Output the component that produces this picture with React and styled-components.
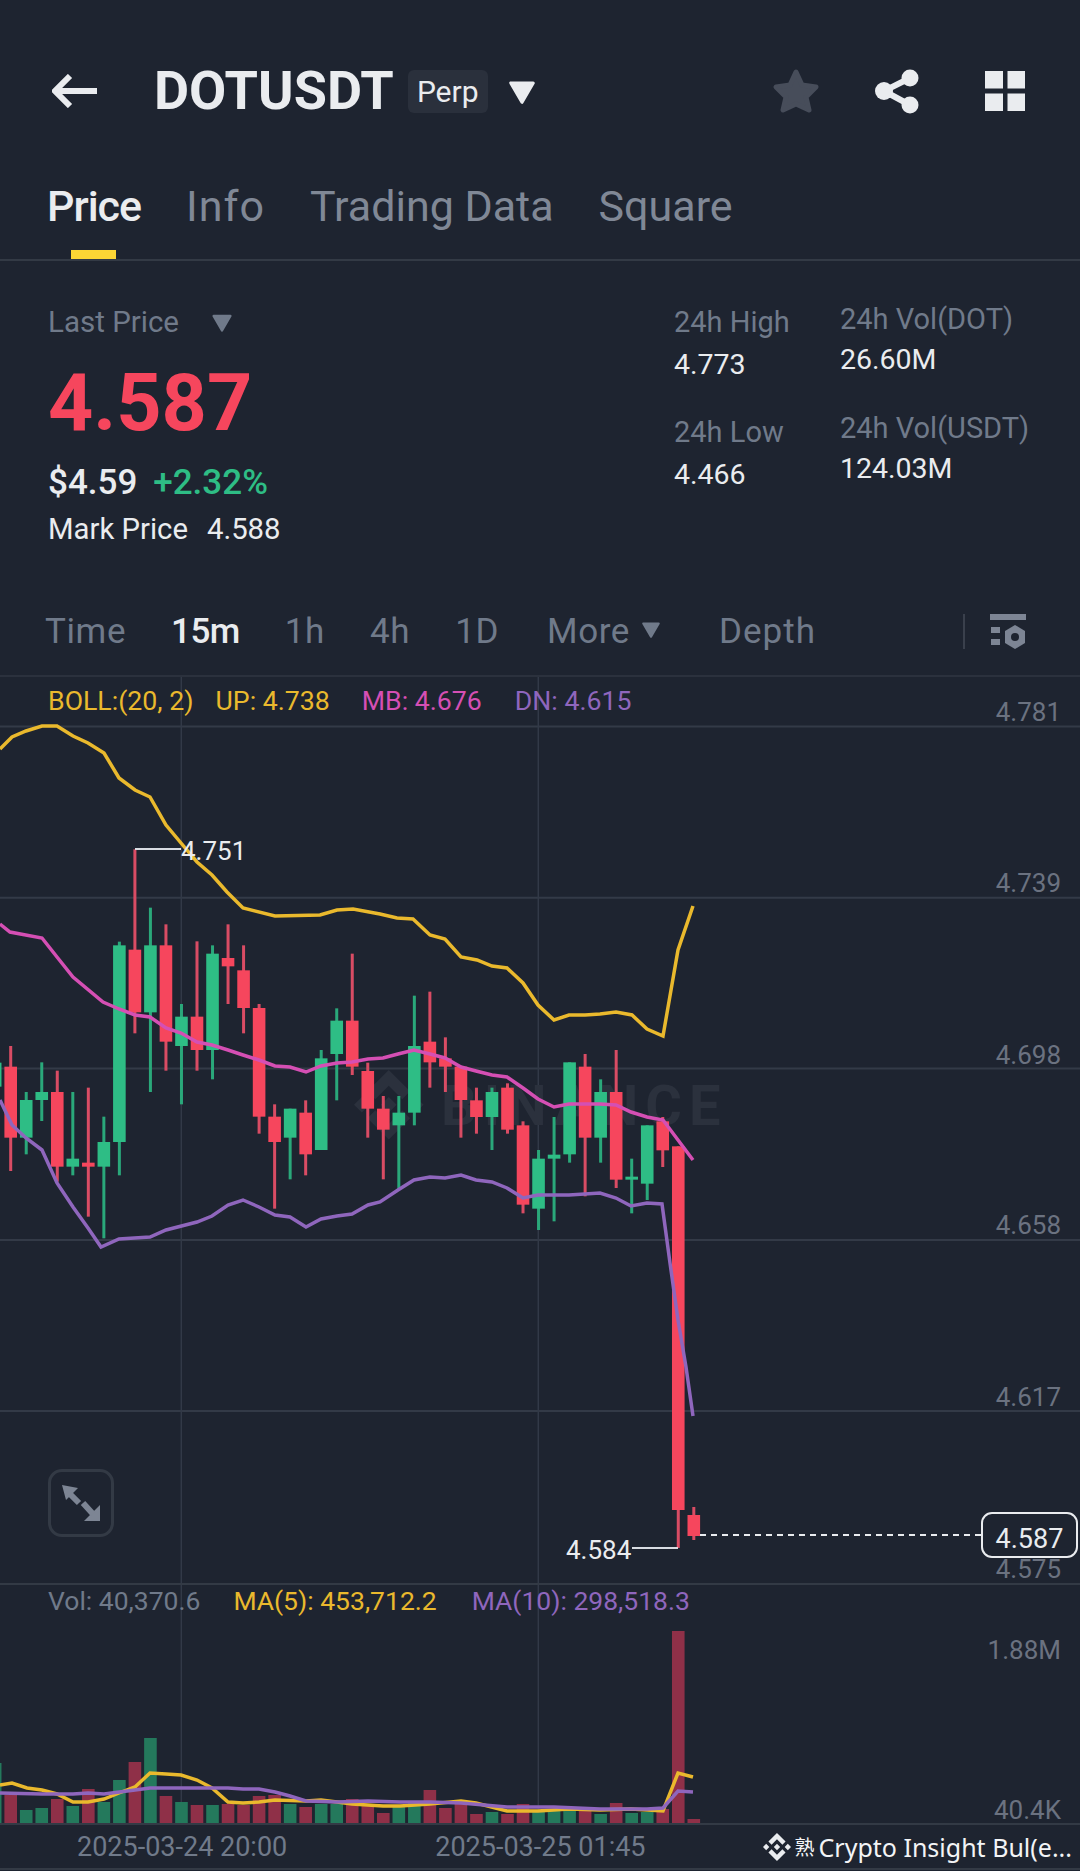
import styled, { createGlobalStyle } from 'styled-components'

const RED = '#f6465d'
const GREEN = '#2ebd85'
const YELLOW = '#eab92d'
const PINK = '#d54fb4'
const PURPLE = '#8f66bd'

// type, wick top, body top, body bottom, wick bottom (in 1/3 px from y=820)
const CANDLES = [
  ['g', 728, 728, 800, 800],
  ['r', 678, 740, 953, 1053],
  ['g', 816, 840, 953, 1003],
  ['g', 727, 816, 840, 903],
  ['r', 752, 816, 1040, 1085],
  ['g', 816, 1016, 1040, 1066],
  ['r', 803, 1028, 1040, 1190],
  ['g', 890, 966, 1040, 1255],
  ['g', 365, 376, 966, 1066],
  ['r', 88, 389, 577, 640],
  ['g', 263, 376, 577, 816],
  ['r', 313, 376, 665, 752],
  ['g', 552, 590, 678, 853],
  ['r', 364, 590, 690, 752],
  ['g', 376, 401, 690, 778],
  ['r', 313, 414, 439, 552],
  ['r', 376, 451, 564, 640],
  ['r', 552, 564, 890, 941],
  ['r', 853, 890, 966, 1166],
  ['g', 866, 866, 953, 1078],
  ['r', 841, 878, 1003, 1066],
  ['g', 690, 715, 990, 990],
  ['g', 565, 602, 702, 841],
  ['r', 401, 602, 740, 765],
  ['r', 728, 753, 866, 953],
  ['r', 828, 866, 929, 1078],
  ['g', 828, 878, 916, 1108],
  ['g', 527, 678, 878, 916],
  ['r', 515, 665, 727, 803],
  ['r', 652, 715, 740, 816],
  ['r', 740, 740, 840, 953],
  ['r', 803, 841, 891, 941],
  ['g', 803, 816, 891, 990],
  ['r', 790, 803, 929, 941],
  ['r', 904, 916, 1154, 1180],
  ['g', 990, 1016, 1166, 1230],
  ['g', 891, 1004, 1016, 1204],
  ['g', 727, 727, 1003, 1028],
  ['r', 702, 740, 953, 1129],
  ['g', 778, 816, 953, 1028],
  ['r', 690, 816, 1079, 1104],
  ['g', 1016, 1070, 1079, 1180],
  ['g', 916, 916, 1091, 1140],
  ['r', 891, 904, 991, 1041],
  ['r', 979, 979, 2070, 2184],
  ['r', 2061, 2085, 2148, 2160],
]

const VOLUMES = [
  ['g', 1763], ['r', 1795], ['g', 1810], ['g', 1808], ['r', 1799], ['g', 1806], ['r', 1789], ['g', 1802],
  ['g', 1780], ['r', 1762], ['g', 1738], ['r', 1796], ['g', 1802], ['r', 1805], ['g', 1805], ['r', 1804],
  ['r', 1805], ['r', 1796], ['r', 1795], ['g', 1804], ['r', 1807], ['g', 1804], ['g', 1804], ['r', 1799],
  ['r', 1804], ['r', 1813], ['g', 1807], ['g', 1802], ['r', 1790], ['r', 1808], ['r', 1802], ['r', 1814],
  ['g', 1812], ['r', 1814], ['r', 1804], ['g', 1812], ['g', 1811], ['g', 1810], ['r', 1807], ['g', 1814],
  ['r', 1803], ['g', 1813], ['g', 1812], ['r', 1809], ['r', 1631], ['r', 1819],
]

const UPPER = '0,749 12,737 26,731 42,726 57,726 73,736 88,743 104,753 119,778 135,790 150,797 166,825 181,843 197,862 212,875 227,892 243,908 275,916 320,915 337,910 353,909 380,914 397,918 413,919 430,935 445,939 461,957 477,960 492,966 507,968 523,983 538,1005 554,1020 569,1015 585,1015 600,1014 616,1012 632,1015 647,1029 663,1036 678,950 693,906'
const MIDDLE = '0,924 10,932 42,938 57,957 73,977 103,1002 119,1009 135,1015 150,1017 166,1028 181,1033 197,1042 212,1045 228,1050 243,1055 259,1060 275,1066 290,1067 306,1072 321,1066 337,1063 352,1062 368,1059 383,1058 398,1054 414,1050 430,1054 445,1058 461,1067 476,1071 492,1075 507,1077 523,1088 538,1099 554,1107 569,1104 585,1104 600,1104 616,1105 631,1112 647,1117 663,1120 678,1140 693,1160'
const LOWER = '0,1100 12,1125 26,1138 42,1150 57,1183 73,1207 88,1228 101,1247 119,1239 150,1237 166,1230 197,1222 212,1216 228,1205 243,1200 259,1207 275,1215 290,1217 306,1227 321,1219 337,1216 352,1214 368,1205 380,1202 398,1190 414,1180 430,1177 445,1178 461,1175 476,1180 492,1182 507,1188 523,1198 538,1195 569,1195 600,1193 616,1198 631,1206 647,1203 662,1204 670,1263 678,1320 686,1367 693,1416'
const VOL_MA5 = '0,1785 12,1783 27,1788 42,1790 57,1794 73,1802 88,1802 104,1799 119,1793 135,1787 150,1773 166,1774 181,1775 197,1780 212,1788 228,1802 243,1803 259,1802 275,1800 306,1801 321,1800 337,1802 352,1804 383,1806 400,1806 430,1804 461,1801 476,1803 507,1811 538,1811 569,1809 600,1810 631,1809 663,1811 678,1773 693,1777'
const VOL_MA10 = '0,1793 42,1794 73,1794 88,1793 104,1794 135,1790 150,1788 181,1788 228,1788 243,1789 259,1789 275,1792 290,1796 306,1801 337,1802 368,1801 400,1802 430,1802 461,1803 507,1807 554,1807 600,1809 647,1809 663,1808 678,1791 693,1792'

const AXIS = [['4.781', 711], ['4.739', 882], ['4.698', 1054], ['4.658', 1224], ['4.617', 1396], ['4.575', 1568]]
const GRID_Y = [726.5, 897.7, 1068.5, 1240, 1411]
const GRID_X = [181.3, 538.3]
const BINANCE_D = 'M16.624 13.92l2.718 2.716-7.353 7.353-7.353-7.352 2.717-2.717 4.636 4.66 4.635-4.66zm4.637-4.636L24 12l-2.715 2.716L18.568 12l2.693-2.716zm-9.272 0l2.716 2.692-2.716 2.717L9.272 12l2.717-2.715zm-9.273 0L5.41 12l-2.692 2.692L0 12l2.716-2.716zM11.989.012l7.353 7.329-2.718 2.715-4.635-4.635-4.636 4.66-2.717-2.716 7.353-7.353z'

const candleX = (i) => 10.7 + 15.525 * (i - 1)
const toY = (v) => 820 + v / 3

const GlobalStyle = createGlobalStyle`
  html, body {
    margin: 0;
    padding: 0;
    background: #1e2430;
  }
`

const Caret = ({ size, color }) => (
  <CaretSvg viewBox="0 0 20 20" width={size} height={size}>
    <path d="M3 5 H17 L10 17 Z" fill={color} stroke={color} strokeWidth="2" strokeLinejoin="round" />
  </CaretSvg>
)

const Candles = () => (
  <g>
    {CANDLES.map(([kind, high, top, bottom, low], i) => {
      const color = kind === 'g' ? GREEN : RED
      const wick = kind === 'g' ? '#2aa87a' : '#d94c64'
      const x = candleX(i)
      return (
        <g key={i}>
          <rect x={x - 1.5} y={toY(high)} width="3" height={(low - high) / 3} fill={wick} />
          <rect x={x - 6.3} y={toY(top)} width="12.6" height={Math.max((bottom - top) / 3, 3)} fill={color} />
        </g>
      )
    })}
  </g>
)

const App = () => (
  <Page>
    <GlobalStyle />
    <Header>
      <BackIcon viewBox="0 0 45 34" width="45" height="34">
        <path d="M18 2 L3 17 L18 32 M4 17 H45" fill="none" stroke="#eaecef" strokeWidth="6" />
      </BackIcon>
      <Symbol>DOTUSDT</Symbol>
      <Chip>Perp</Chip>
      <CaretSlot>
        <Caret size={32} color="#eaecef" />
      </CaretSlot>
      <HeaderActions>
        <svg viewBox="0 0 48 46" width="48" height="46">
          <path d="M24 4 L30 17 L44 19 L34 29 L37 42 L24 36 L11 42 L14 29 L4 19 L18 17 Z" fill="#474d5a" stroke="#474d5a" strokeWidth="5" strokeLinejoin="round" />
        </svg>
        <svg viewBox="0 0 44 46" width="44" height="46">
          <path d="M35 10 L9 23 L35 37" fill="none" stroke="#eaecef" strokeWidth="6" />
          <circle cx="9" cy="23" r="9" fill="#eaecef" />
          <circle cx="35" cy="10" r="8.5" fill="#eaecef" />
          <circle cx="35" cy="37" r="8.5" fill="#eaecef" />
        </svg>
        <GridIcon viewBox="0 0 40 40" width="40" height="40">
          <rect x="0" y="0" width="18" height="17.5" fill="#eaecef" />
          <rect x="22.5" y="0" width="17.5" height="17.5" fill="#eaecef" />
          <rect x="0" y="22.5" width="18" height="17.5" fill="#eaecef" />
          <rect x="22.5" y="22.5" width="17.5" height="17.5" fill="#eaecef" />
        </GridIcon>
      </HeaderActions>
    </Header>

    <TabBar>
      <Tab $active>Price</Tab>
      <Tab $wide>Info</Tab>
      <Tab>Trading Data</Tab>
      <Tab>Square</Tab>
    </TabBar>

    <Stats>
      <div>
        <LastLabel>
          Last Price
          <Caret size={24} color="#707a8a" />
        </LastLabel>
        <BigPrice>4.587</BigPrice>
        <ChangeRow>
          <Fiat>$4.59</Fiat>
          <Change>+2.32%</Change>
        </ChangeRow>
        <MarkRow>
          <span>Mark Price</span>
          <span>4.588</span>
        </MarkRow>
      </div>
      <StatColumn $top={41} $gap={27}>
        <StatGroup $gap={3}>
          <StatLabel>24h High</StatLabel>
          <StatValue>4.773</StatValue>
        </StatGroup>
        <StatGroup $gap={3}>
          <StatLabel>24h Low</StatLabel>
          <StatValue>4.466</StatValue>
        </StatGroup>
      </StatColumn>
      <StatColumn $top={38} $gap={28}>
        <StatGroup $gap={1}>
          <StatLabel>24h Vol(DOT)</StatLabel>
          <StatValue>26.60M</StatValue>
        </StatGroup>
        <StatGroup $gap={1}>
          <StatLabel>24h Vol(USDT)</StatLabel>
          <StatValue>124.03M</StatValue>
        </StatGroup>
      </StatColumn>
    </Stats>

    <Intervals>
      <Interval>Time</Interval>
      <Interval $active>15m</Interval>
      <Interval>1h</Interval>
      <Interval>4h</Interval>
      <Interval>1D</Interval>
      <MoreItem>
        More
        <Caret size={22} color="#707a8a" />
      </MoreItem>
      <DepthItem>Depth</DepthItem>
      <ToolGroup>
        <VDivider />
        <svg viewBox="0 0 36 36" width="36" height="36">
          <rect x="0" y="0" width="36" height="6" fill="#7d8594" />
          <rect x="1" y="13" width="9" height="6" fill="#7d8594" />
          <rect x="1" y="25" width="9" height="6" fill="#7d8594" />
          <path d="M25 11 L35 17 V29 L25 35 L15 29 V17 Z" fill="#7d8594" />
          <circle cx="25" cy="23" r="4" fill="#1e2430" />
        </svg>
      </ToolGroup>
    </Intervals>

    <PricePane>
      <ChartSvg viewBox="0 677 1080 906">
        {GRID_Y.map((y) => <line key={y} x1="0" x2="1080" y1={y} y2={y} stroke="#333a47" strokeWidth="2" />)}
        {GRID_X.map((x) => <line key={x} x1={x} x2={x} y1="677" y2="1583" stroke="#323947" strokeWidth="1.5" />)}
        <g transform="translate(354 1070) scale(2.9)">
          <path d={BINANCE_D} fill="#2b313d" />
        </g>
        <Watermark x="441" y="1125">BINANCE</Watermark>
        <polyline points={UPPER} fill="none" stroke={YELLOW} strokeWidth="3.5" />
        <Candles />
        <polyline points={MIDDLE} fill="none" stroke={PINK} strokeWidth="3.5" />
        <polyline points={LOWER} fill="none" stroke={PURPLE} strokeWidth="3.5" />
        {AXIS.map(([label, y]) => <AxisText key={label} x="1061" y={y + 10}>{label}</AxisText>)}
        <line x1="135" x2="181" y1="849" y2="849" stroke="#d8dce2" strokeWidth="2" />
        <PriceMark x="181" y="860">4.751</PriceMark>
        <line x1="632" x2="678" y1="1548" y2="1548" stroke="#d8dce2" strokeWidth="2" />
        <PriceMark x="566" y="1559">4.584</PriceMark>
        <line x1="700" x2="982" y1="1535" y2="1535" stroke="#eaecef" strokeWidth="2" strokeDasharray="6 5" />
      </ChartSvg>
      <Legend $top={8} $size={26.7}>
        <LegendItem $color={YELLOW} $gap={22}>BOLL:(20, 2)</LegendItem>
        <LegendItem $color={YELLOW} $gap={32}>UP: 4.738</LegendItem>
        <LegendItem $color={PINK} $gap={33}>MB: 4.676</LegendItem>
        <LegendItem $color={PURPLE}>DN: 4.615</LegendItem>
      </Legend>
      <ExpandButton>
        <svg viewBox="0 0 38 36" width="38" height="36">
          <path d="M0 0 L16 3 L4 15 Z M38 36 H22 L38 20 Z" fill="#7d8594" />
          <path d="M6 7 L17 18 M21 18 L31 29" stroke="#7d8594" strokeWidth="6" />
        </svg>
      </ExpandButton>
      <LastPriceTag>4.587</LastPriceTag>
    </PricePane>

    <VolumePane>
      <ChartSvg viewBox="0 1585 1080 238">
        {GRID_X.map((x) => <line key={x} x1={x} x2={x} y1="1585" y2="1823" stroke="#323947" strokeWidth="1.5" />)}
        {VOLUMES.map(([kind, top], i) => (
          <rect key={i} x={candleX(i) - 6.3} y={top} width="12.6" height={1823 - top} fill={kind === 'g' ? '#24795c' : '#8f3048'} />
        ))}
        <polyline points={VOL_MA5} fill="none" stroke={YELLOW} strokeWidth="3.5" />
        <polyline points={VOL_MA10} fill="none" stroke={PURPLE} strokeWidth="3.5" />
        <AxisText x="1061" y="1659">1.88M</AxisText>
        <AxisText x="1061" y="1819">40.4K</AxisText>
      </ChartSvg>
      <Legend $top={0} $size={26.5}>
        <LegendItem $color="#707a8a" $gap={33}>Vol: 40,370.6</LegendItem>
        <LegendItem $color={YELLOW} $gap={35}>MA(5): 453,712.2</LegendItem>
        <LegendItem $color={PURPLE}>MA(10): 298,518.3</LegendItem>
      </Legend>
    </VolumePane>

    <DateAxis>
      <DateGroup>
        <DateLabel>2025-03-24 20:00</DateLabel>
        <DateLabel>2025-03-25 01:45</DateLabel>
      </DateGroup>
      <Source>
        <svg viewBox="0 0 24 24" width="28" height="28">
          <path d={BINANCE_D} fill="#eaecef" />
        </svg>
        <SourceMark>熟</SourceMark>
        <SourceText>Crypto Insight Bul(e...</SourceText>
      </Source>
    </DateAxis>
  </Page>
)

const Page = styled.div`
  width: 1080px;
  height: 1871px;
  overflow: hidden;
  background: #1e2430;
  color: #eaecef;
  font-family: Roboto, "Noto Sans", sans-serif;
`

const Header = styled.div`
  height: 118px;
  padding-top: 32px;
  display: flex;
  align-items: center;
  padding-left: 52px;
  padding-right: 55px;
`

const BackIcon = styled.svg`
  margin-right: 60px;
  flex: none;
`

const Symbol = styled.div`
  margin-left: -3px;
  font-size: 54px;
  font-weight: 700;
  line-height: 60px;
`

const Chip = styled.div`
  margin-left: 14px;
  width: 80px;
  height: 43px;
  background: #2a303c;
  border-radius: 6px;
  font-size: 30px;
  line-height: 43px;
  text-align: center;
`

const CaretSlot = styled.div`
  margin-left: 18px;
`

const CaretSvg = styled.svg`
  flex: none;
  display: block;
`

const HeaderActions = styled.div`
  margin-left: auto;
  display: flex;
  align-items: center;
  gap: 55px;
`

const GridIcon = styled.svg`
  margin-left: 11px;
`

const TabBar = styled.div`
  height: 111px;
  padding: 31px 0 0 47px;
  box-sizing: border-box;
  border-bottom: 2px solid #333a45;
  display: flex;
  align-items: flex-start;
  gap: 45px;
`

const Tab = styled.div`
  position: relative;
  font-size: 43px;
  line-height: 50px;
  font-weight: ${(p) => (p.$active ? 500 : 400)};
  letter-spacing: ${(p) => (p.$active ? '-1px' : p.$wide ? '1px' : '0')};
  color: ${(p) => (p.$active ? '#eaecef' : '#808896')};

  ${(p) => p.$active && `
    &::after {
      content: '';
      position: absolute;
      left: 24px;
      top: 69px;
      width: 45px;
      height: 9px;
      background: #fcd535;
    }
  `}
`

const Stats = styled.div`
  height: 325px;
  padding-left: 48px;
  display: grid;
  grid-template-columns: 626px 166px 1fr;
`

const LastLabel = styled.div`
  margin-top: 41px;
  height: 40px;
  display: flex;
  align-items: center;
  gap: 31px;
  font-size: 29.5px;
  color: #707a8a;
`

const BigPrice = styled.div`
  margin-top: 17px;
  font-size: 79px;
  line-height: 88px;
  font-weight: 700;
  color: ${RED};
`

const ChangeRow = styled.div`
  margin-top: 14px;
  display: flex;
  gap: 16px;
  font-size: 35px;
  line-height: 44px;
  font-weight: 500;
`

const Fiat = styled.span`
  color: #eaecef;
`

const Change = styled.span`
  color: ${GREEN};
`

const MarkRow = styled.div`
  margin-top: 4px;
  display: flex;
  gap: 19px;
  font-size: 29.3px;
  line-height: 40px;
`

const StatColumn = styled.div`
  padding-top: ${(p) => p.$top}px;
  display: flex;
  flex-direction: column;
  gap: ${(p) => p.$gap}px;
`

const StatGroup = styled.div`
  display: flex;
  flex-direction: column;
  gap: ${(p) => p.$gap}px;
`

const StatLabel = styled.div`
  font-size: 29px;
  line-height: 40px;
  color: #707a8a;
`

const StatValue = styled.div`
  font-size: 28.5px;
  line-height: 40px;
  color: #eaecef;
`

const Intervals = styled.div`
  height: 89px;
  box-sizing: border-box;
  padding: 2px 54px 0 45px;
  display: flex;
  align-items: center;
  gap: 45px;
`

const Interval = styled.div`
  font-size: 35px;
  font-weight: ${(p) => (p.$active ? 500 : 400)};
  letter-spacing: ${(p) => (p.$active ? '-0.5px' : '0.6px')};
  color: ${(p) => (p.$active ? '#eaecef' : '#707a8a')};
`

const MoreItem = styled(Interval)`
  margin-left: 3px;
  display: flex;
  align-items: center;
  gap: 10px;

  svg {
    margin-bottom: 6px;
  }
`

const DepthItem = styled(Interval)`
  margin-left: 12px;
  letter-spacing: 1px;
`

const ToolGroup = styled.div`
  margin-left: auto;
  display: flex;
  align-items: center;
  gap: 25px;
`

const VDivider = styled.div`
  width: 2px;
  height: 35px;
  background: #3a404c;
`

const PricePane = styled.div`
  position: relative;
  height: 906px;
  border-top: 2px solid #2b313d;
`

const VolumePane = styled.div`
  position: relative;
  height: 238px;
  border-top: 2px solid #333a45;
  border-bottom: 2px solid #333a45;
`

const ChartSvg = styled.svg`
  display: block;
  width: 100%;
  height: 100%;
  overflow: visible;
`

const Legend = styled.div`
  position: absolute;
  left: 48px;
  top: ${(p) => p.$top}px;
  display: flex;
  font-size: ${(p) => p.$size}px;
  line-height: 32px;
  white-space: nowrap;
`

const LegendItem = styled.span`
  color: ${(p) => p.$color};
  margin-right: ${(p) => p.$gap ?? 0}px;
`

const AxisText = styled.text`
  font-family: Roboto, sans-serif;
  font-size: 26px;
  fill: #6b7280;
  text-anchor: end;
`

const PriceMark = styled.text`
  font-family: Roboto, sans-serif;
  font-size: 26px;
  fill: #eaecef;
`

const Watermark = styled.text`
  font-family: Roboto, sans-serif;
  font-size: 56px;
  font-weight: 700;
  letter-spacing: 7px;
  fill: #2b313d;
`

const ExpandButton = styled.div`
  position: absolute;
  left: 48px;
  top: 792px;
  width: 60px;
  height: 62px;
  border: 3px solid #333a45;
  border-radius: 14px;
  display: flex;
  align-items: center;
  justify-content: center;
`

const LastPriceTag = styled.div`
  position: absolute;
  left: 981px;
  top: 835px;
  width: 97px;
  height: 46px;
  box-sizing: border-box;
  background: #1e2430;
  border: 2px solid #eaecef;
  border-radius: 11px;
  text-align: center;
  font-size: 27px;
  line-height: 50px;
`

const DateAxis = styled.div`
  height: 43px;
  border-bottom: 2px solid #333a45;
  padding: 0 8px 0 77px;
  display: flex;
  align-items: center;
  justify-content: space-between;
`

const DateGroup = styled.div`
  display: flex;
  gap: 148px;
`

const DateLabel = styled.div`
  font-size: 27px;
  color: #707a8a;
  white-space: nowrap;
`

const Source = styled.div`
  display: flex;
  align-items: center;
  gap: 4px;
`

const SourceMark = styled.span`
  font-family: "Noto Sans CJK SC", sans-serif;
  font-size: 20px;
  color: #f3f4f6;
`

const SourceText = styled.span`
  font-family: "Noto Sans", sans-serif;
  font-size: 25px;
  color: #f3f4f6;
  white-space: nowrap;
`

export default App
